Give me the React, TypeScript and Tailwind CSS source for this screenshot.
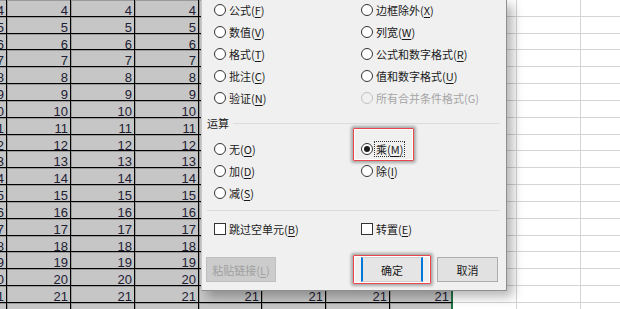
import React from "react";

const ROWS = Array.from({ length: 19 }, (_, i) => i + 4);

type Col = { w: string; sel: boolean; last?: boolean; first?: boolean };
const COLS: Col[] = [
  { w: "w-[64px]", sel: true, first: true },
  { w: "w-[64px]", sel: true },
  { w: "w-[64px]", sel: true },
  { w: "w-[64px]", sel: true },
  { w: "w-[63px]", sel: true },
  { w: "w-[64px]", sel: true },
  { w: "w-[64px]", sel: true },
  { w: "w-[63px]", sel: true, last: true },
  { w: "w-[64px]", sel: false },
  { w: "w-[64px]", sel: false },
  { w: "w-[64px]", sel: false },
];

function Sheet() {
  return (
    <div className="flex flex-col -ml-[57px]">
      {ROWS.map((r, i) => (
        <div key={r} className={`flex shrink-0 ${i % 6 === 2 ? "h-[16px]" : "h-[17px]"}`}>
          {COLS.map((c, j) => (
            <div
              key={j}
              className={`${c.w} h-full shrink-0 overflow-hidden ${
                c.sel
                  ? c.last
                    ? "bg-[#c6c6c6] border-b border-b-black border-r-2 border-r-[#217346] shadow-[inset_1px_1px_0_#9a9a9a]"
                    : "bg-[#c6c6c6] border-b border-r border-black shadow-[inset_1px_1px_0_#9a9a9a]"
                  : "bg-white border-b border-r border-[#d4d4d4]"
              }`}
            >
              {c.sel && (
                <div className="text-right pr-[2px] pt-[3px] leading-[15px] text-[13px] text-[#202034]">
                  {r}
                </div>
              )}
            </div>
          ))}
        </div>
      ))}
    </div>
  );
}

function Radio({ checked, disabled }: { checked?: boolean; disabled?: boolean }) {
  return (
    <span
      className={`w-[12px] h-[12px] rounded-full border shrink-0 flex items-center justify-center ${
        disabled ? "border-[#c2c2c2] bg-[#f0f0f0]" : "border-[#333333] bg-white"
      }`}
    >
      {checked && <span className="w-[6px] h-[6px] rounded-full bg-[#1a1a1a]" />}
    </span>
  );
}

function Check() {
  return <span className="w-[12px] h-[12px] border border-[#333333] bg-white shrink-0" />;
}

function Label({ text, k, disabled }: { text: string; k: string; disabled?: boolean }) {
  return (
    <span className={`leading-[14px] whitespace-nowrap ${disabled ? "text-[#a6a6a6]" : "text-[#1a1a1a]"}`}>
      {text}(
      {disabled ? k : <span className="underline underline-offset-[2px]">{k}</span>})
    </span>
  );
}

function Opt({
  text,
  k,
  disabled,
  left,
}: {
  text: string;
  k: string;
  disabled?: boolean;
  left?: boolean;
}) {
  return (
    <div className={`h-[22px] flex items-center gap-[3px] ${left ? "pl-[7px]" : ""}`}>
      <Radio disabled={disabled} />
      <Label text={text} k={k} disabled={disabled} />
    </div>
  );
}

function Dialog() {
  return (
    <div className="absolute left-[201px] top-[-1px] w-[306px] bg-[#f0f0f0] border-l border-l-[#c8c8c8] border-r border-b border-r-[#8e8e8e] border-b-[#8e8e8e] shadow-[6px_6px_10px_rgba(0,0,0,0.28)] pl-[5px] pr-[6px] pb-[8px] text-[11px] font-['Noto_Sans_CJK_SC','Noto_Sans',sans-serif]">
      <div className="grid grid-cols-[154px_1fr]">
        <Opt left text="公式" k="F" />
        <Opt text="边框除外" k="X" />
        <Opt left text="数值" k="V" />
        <Opt text="列宽" k="W" />
        <Opt left text="格式" k="T" />
        <Opt text="公式和数字格式" k="R" />
        <Opt left text="批注" k="C" />
        <Opt text="值和数字格式" k="U" />
        <Opt left text="验证" k="N" />
        <Opt text="所有合并条件格式" k="G" disabled />
      </div>

      <div className="mt-[6px] h-[16px] flex items-center">
        <span className="leading-[14px] text-[#1a1a1a]">运算</span>
        <span className="ml-[4px] flex-1 h-px bg-[#dcdcdc]" />
      </div>

      <div className="mt-[7px] grid grid-cols-[154px_1fr]">
        <Opt left text="无" k="O" />
        <div className="relative h-[22px] flex items-center gap-[3px]">
          <span className="absolute -left-[8px] -top-[10px] w-[61px] h-[33px] border-[1.5px] border-[#e8474c] rounded-[1px] shadow-[0_0_3px_2px_rgba(0,0,0,0.3),inset_0_0_0_1px_#ffffff]" />
          <Radio checked />
          <span className="-ml-[2px] px-[1px] border border-dotted border-[#333333] leading-[14px] text-[#1a1a1a] whitespace-nowrap">
            乘(<span className="underline underline-offset-[2px]">M</span>)
          </span>
        </div>
        <Opt left text="加" k="D" />
        <Opt text="除" k="I" />
        <Opt left text="减" k="S" />
        <div />
      </div>

      <div className="mt-[6px] h-px bg-[#dcdcdc]" />

      <div className="mt-[7px] grid grid-cols-[154px_1fr]">
        <div className="h-[22px] flex items-center gap-[3px] pl-[7px]">
          <Check />
          <Label text="跳过空单元" k="B" />
        </div>
        <div className="h-[22px] flex items-center gap-[3px]">
          <Check />
          <Label text="转置" k="E" />
        </div>
      </div>

      <div className="mt-[17px] grid grid-cols-[154px_1fr]">
        <div className="-ml-[1px]">
          <div className="w-[70px] h-[25px] bg-[#cccccc] border border-[#bfbfbf] flex items-center justify-center text-[#a0a0a0] leading-[14px]">
            粘贴链接(<span className="underline underline-offset-[2px]">L</span>)
          </div>
        </div>
        <div className="flex gap-[14px]">
          <div className="relative">
            <span className="absolute -left-[8px] -right-[8px] -top-[2px] -bottom-[2px] border-[1.5px] border-[#e8474c] rounded-[1px] shadow-[0_0_3px_2px_rgba(0,0,0,0.3),inset_0_0_0_1px_#ffffff]" />
            <div className="relative w-[62px] h-[25px] bg-[#e5e5e5] border-y border-y-[#cfcfcf] border-x-2 border-x-[#0078d7] flex items-center justify-center text-[#1a1a1a] leading-[14px]">
              确定
            </div>
          </div>
          <div className="w-[61px] h-[25px] bg-[#e1e1e1] border border-[#adadad] flex items-center justify-center text-[#1a1a1a] leading-[14px]">
            取消
          </div>
        </div>
      </div>
    </div>
  );
}

export default function App() {
  return (
    <div className="relative w-[620px] h-[309px] overflow-hidden bg-white font-['Liberation_Sans',Arial,sans-serif]">
      <Sheet />
      <Dialog />
    </div>
  );
}
